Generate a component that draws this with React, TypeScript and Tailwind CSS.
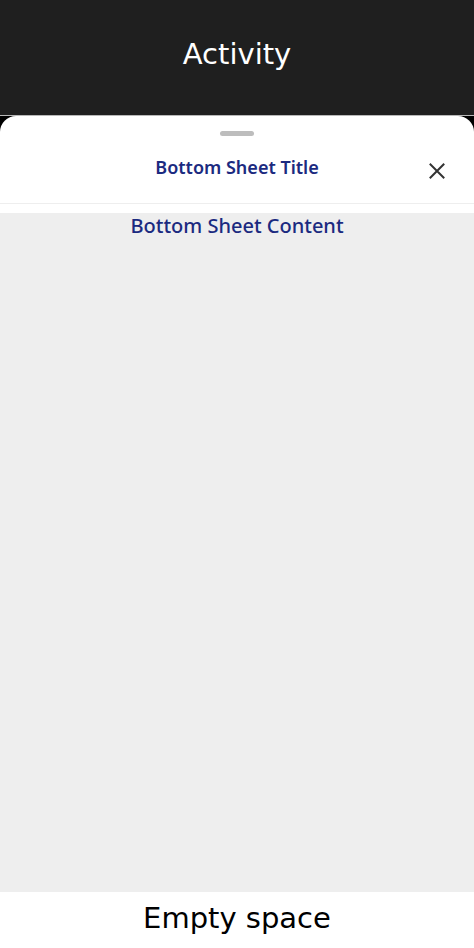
import React from 'react';

const CloseIcon: React.FC = () => (
  <svg width="16" height="16" viewBox="0 0 16 16" fill="none">
    <path d="M1.5 1.5L14.5 14.5M14.5 1.5L1.5 14.5" stroke="#333333" strokeWidth="2" strokeLinecap="square" />
  </svg>
);

const App: React.FC = () => {
  return (
    <div className="w-[474px] h-[948px] flex flex-col bg-white overflow-hidden">
      {/* Activity bar */}
      <div className="h-[116px] shrink-0 bg-[#1f1f1f] border-b border-[#b8b8b8] flex items-center justify-center">
        <span className="text-white text-[29px] leading-none font-['DejaVu_Sans',sans-serif] -mt-[6px]">Activity</span>
      </div>

      {/* Sheet over the dimmed background */}
      <div className="h-[776px] shrink-0 bg-black flex flex-col">
        <div className="flex-1 flex flex-col bg-white rounded-t-[16px] overflow-hidden">
          <div className="flex justify-center pt-[15px]">
            <div className="w-[34px] h-[5px] rounded-full bg-[#bdbdbd]" />
          </div>
          <div className="relative h-[67px] flex items-center justify-center">
            <span className="text-[18px] font-semibold text-[#1b2a80] font-['Noto_Sans',sans-serif] -mt-[4px]">
              Bottom Sheet Title
            </span>
            <button className="absolute right-[29px] top-[27px]">
              <CloseIcon />
            </button>
          </div>
          <div className="h-px bg-[#eeeeee]" />
          <div className="h-[9px]" />
          <div className="flex-1 bg-[#eeeeee] flex justify-center">
            <span className="text-[20px] leading-[26px] font-medium text-[#1b2a80] font-['Noto_Sans',sans-serif]">
              Bottom Sheet Content
            </span>
          </div>
        </div>
      </div>

      {/* Empty space */}
      <div className="flex-1 flex items-center justify-center">
        <span className="text-black text-[29px] leading-none font-['DejaVu_Sans',sans-serif] -mt-[4px]">Empty space</span>
      </div>
    </div>
  );
};

export default App;
